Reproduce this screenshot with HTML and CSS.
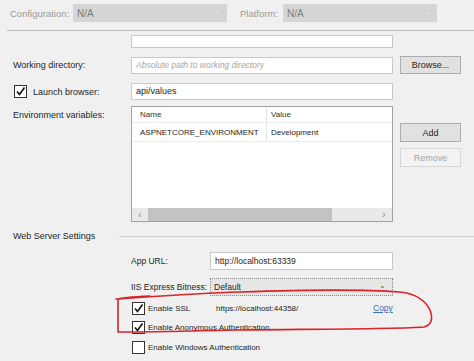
FILE: index.html
```html
<!DOCTYPE html>
<html lang="en">
<head>
    <meta charset="UTF-8">
    <title>Debug Properties</title>
    <link rel="stylesheet" href="styles.css">
</head>
<body>

<div class="page">
    <div class="topbar">
        <span class="top-label config-label">Configuration:</span>
        <div class="top-select">N/A <span class="chev">&#8964;</span></div>
        <span class="top-label platform-label">Platform:</span>
        <div class="top-select">N/A <span class="chev">&#8964;</span></div>
    </div>
    <div class="divider"></div>

    <div class="row row-cut">
        <span class="label"></span>
        <div class="textbox"></div>
    </div>

    <div class="row row-workdir">
        <span class="label">Working directory:</span>
        <div class="textbox placeholder">Absolute path to working directory</div>
        <button class="btn">Browse...</button>
    </div>

    <div class="row row-launch">
        <span class="label">
            <span class="check checked"><svg width="11" height="11" viewBox="0 0 11 11"><path d="M2 5.5 L4.5 8.5 L9.5 1.5" fill="none" stroke="#111" stroke-width="1.6"/></svg></span>
            Launch browser:
        </span>
        <div class="textbox">api/values</div>
    </div>

    <div class="row row-env">
        <span class="label">Environment variables:</span>
        <div class="grid">
            <div class="grid-head">
                <span class="col-name">Name</span>
                <span class="col-value">Value</span>
            </div>
            <div class="grid-row">
                <span class="col-name">ASPNETCORE_ENVIRONMENT</span>
                <span class="col-value">Development</span>
            </div>
            <div class="grid-fill"></div>
            <div class="hscroll">
                <span class="arrow">&#8249;</span>
                <span class="thumb"></span>
                <span class="track"></span>
                <span class="arrow">&#8250;</span>
            </div>
        </div>
        <div class="side-buttons">
            <button class="btn">Add</button>
            <button class="btn disabled">Remove</button>
        </div>
    </div>

    <div class="section-head">
        <span>Web Server Settings</span>
        <span class="section-line"></span>
    </div>

    <div class="sub-row sub-url">
        <span class="sub-label">App URL:</span>
        <div class="textbox wide">http://localhost:63339</div>
    </div>

    <div class="sub-row sub-bitness">
        <span class="sub-label">IIS Express Bitness:</span>
        <div class="combo">Default <span class="chev">&#8964;</span></div>
    </div>

    <div class="sub-row check-row ssl-row">
        <span class="check checked"><svg width="11" height="11" viewBox="0 0 11 11"><path d="M2 5.5 L4.5 8.5 L9.5 1.5" fill="none" stroke="#111" stroke-width="1.6"/></svg></span>
        <span class="check-text ssl-text">Enable SSL</span>
        <span class="ssl-url">https://localhost:44358/</span>
        <a class="copy">Copy</a>
    </div>

    <div class="sub-row check-row anon-row">
        <span class="check checked"><svg width="11" height="11" viewBox="0 0 11 11"><path d="M2 5.5 L4.5 8.5 L9.5 1.5" fill="none" stroke="#111" stroke-width="1.6"/></svg></span>
        <span class="check-text">Enable Anonymous Authentication</span>
    </div>

    <div class="sub-row check-row win-row">
        <span class="check"></span>
        <span class="check-text">Enable Windows Authentication</span>
    </div>

    <!-- hand drawn marker over the ssl settings -->
    <svg class="scribble" width="474" height="361" viewBox="0 0 474 361">
        <path d="M116 299 C160 296 200 293 240 292 C300 290 360 289 400 292 C418 294 426 302 430 310 C433 318 432 325 424 327 C400 329 330 329 237 330 C190 331 150 332 118 332 C118 322 118 310 118 299 C120 298 130 297 150 296"
              fill="none" stroke="#d9232a" stroke-width="1.6" stroke-linecap="round"/>
    </svg>
</div>

</body>
</html>
```

FILE: styles.css
```css
body {
    margin: 0;
    background-color: #f0f0f0;
    font-family: "Liberation Sans", Arial, sans-serif;
    font-size: 9px;
    color: #1e1e1e;
}
.page {
    position: relative;
    width: 474px;
    height: 361px;
    overflow: hidden;
}
.topbar {
    display: flex;
    align-items: center;
    height: 18px;
    padding-top: 4px;
    padding-bottom: 8px;
}
.top-label {
    color: #9a9a9a;
    font-size: 9.5px;
}
.config-label {
    margin-left: 10px;
    width: 63px;
}
.platform-label {
    margin-left: 13px;
    width: 43px;
}
.top-select {
    display: flex;
    align-items: center;
    justify-content: space-between;
    width: 154px;
    height: 18px;
    padding: 0 6px 0 4px;
    box-sizing: border-box;
    background-color: #d5d5d5;
    color: #7a7a7a;
    font-size: 10px;
}
.top-select .chev {
    color: #eaeaea;
    font-size: 8px;
    margin-top: -4px;
}
.divider {
    margin-left: 7px;
    border-top: 1px solid #bfbfbf;
}
.row {
    display: flex;
    align-items: center;
}
.label {
    display: flex;
    align-items: center;
    width: 118px;
    padding-left: 13px;
    white-space: nowrap;
}
.textbox {
    width: 262px;
    box-sizing: border-box;
    height: 17px;
    line-height: 15px;
    padding: 0 4px;
    background-color: #fff;
    border: 1px solid #c9c9c9;
    white-space: nowrap;
}
.textbox.placeholder {
    color: #a6a6a6;
    font-style: italic;
    font-size: 8.5px;
}
.textbox.wide {
    width: 183px;
    height: 18px;
    line-height: 16px;
    font-size: 8.5px;
}
.row-cut {
    margin-top: 4px;
}
.row-cut .textbox {
    height: 13px;
}
.row-workdir {
    margin-top: 8px;
    height: 18px;
}
.btn {
    font-family: inherit;
    font-size: 9px;
    color: #1e1e1e;
    width: 61px;
    height: 18px;
    margin-left: 7px;
    padding: 0;
    background-color: #e1e1e1;
    border: 1px solid #adadad;
}
.btn.disabled {
    color: #a3a3a3;
    background-color: #f3f3f3;
    border-color: #d6d6d6;
}
.row-launch {
    margin-top: 9px;
}
.check {
    display: inline-flex;
    align-items: center;
    justify-content: center;
    width: 13px;
    height: 13px;
    box-sizing: border-box;
    background-color: #fff;
    border: 1px solid #333;
    flex-shrink: 0;
}
.label .check {
    margin-left: 1px;
    margin-right: 6px;
}
.row-env {
    align-items: flex-start;
    margin-top: 6px;
}
.row-env .label {
    margin-top: 4px;
}
.grid {
    display: flex;
    flex-direction: column;
    width: 262px;
    height: 116px;
    box-sizing: border-box;
    background-color: #fff;
    border: 1px solid #9fa3a9;
    font-size: 8px;
    white-space: nowrap;
}
.grid-head, .grid-row {
    display: flex;
    align-items: center;
    border-bottom: 1px solid #ececec;
}
.grid-head {
    height: 15px;
    color: #333;
}
.grid-row {
    height: 18px;
}
.col-name {
    width: 135px;
    padding-left: 8px;
    box-sizing: border-box;
    border-right: 1px solid #e6e6e6;
    height: 100%;
    display: flex;
    align-items: center;
}
.col-value {
    padding-left: 4px;
}
.grid-fill {
    flex: 1;
}
.hscroll {
    display: flex;
    height: 13px;
    background-color: #e9e9e9;
}
.hscroll .arrow {
    width: 16px;
    text-align: center;
    color: #8a8a8a;
    line-height: 13px;
    font-size: 10px;
}
.hscroll .thumb {
    width: 184px;
    background-color: #c3c3c3;
}
.hscroll .track {
    flex: 1;
}
.side-buttons {
    display: flex;
    flex-direction: column;
    gap: 6px;
    margin-top: 17px;
}
.side-buttons .btn {
    height: 19px;
}
.section-head {
    display: flex;
    align-items: center;
    margin-top: 8px;
    padding-left: 13px;
    height: 12px;
}
.section-line {
    flex: 1;
    margin-left: 24px;
    border-top: 1px solid #d2d2d2;
}
.sub-row {
    display: flex;
    align-items: center;
    padding-left: 131px;
    font-size: 8px;
    white-space: nowrap;
}
.sub-label {
    width: 79px;
    font-size: 8.5px;
}
.sub-url {
    margin-top: 10px;
}
.sub-bitness {
    margin-top: 8px;
}
.combo {
    display: flex;
    align-items: center;
    justify-content: space-between;
    width: 183px;
    height: 18px;
    box-sizing: border-box;
    padding: 0 6px 0 3px;
    background-color: #e6e6e6;
    border: 1px dotted #8a8a8a;
    font-size: 8.5px;
}
.combo .chev {
    color: #555;
    font-size: 8px;
    margin-top: -4px;
}
.check-row {
    height: 14px;
}
.check-row .check {
    margin-left: 1px;
}
.check-text {
    margin-left: 3px;
}
.ssl-row {
    margin-top: 5px;
}
.ssl-text {
    width: 68px;
}
.ssl-url {
    width: 157px;
}
.copy {
    color: #3a6fb5;
    text-decoration: underline;
    font-size: 8.5px;
}
.anon-row {
    margin-top: 5px;
}
.win-row {
    margin-top: 6px;
}
.scribble {
    position: absolute;
    left: 0;
    top: 0;
    pointer-events: none;
}
```
